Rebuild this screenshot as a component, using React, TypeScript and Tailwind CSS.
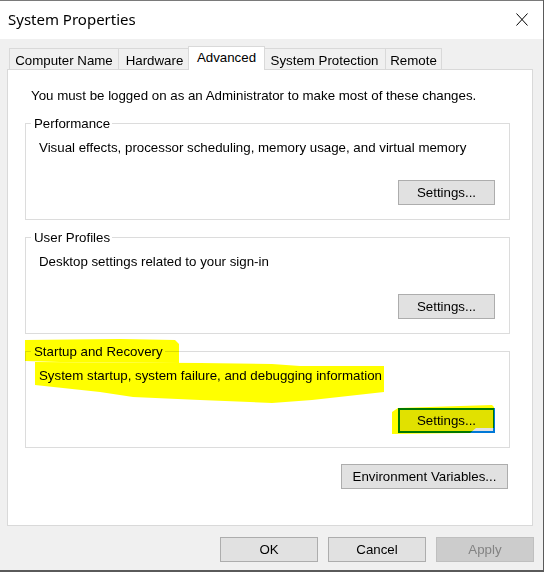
import React from 'react';

const FONT = { fontFamily: '"Liberation Sans", Arial, sans-serif' };

const tabs = [
  { label: 'Computer Name', cls: 'ml-[2px] w-[110px]' },
  { label: 'Hardware', cls: '-ml-px w-[73px]' },
  { label: 'Advanced', cls: '-ml-[3px] -mr-[2px] w-[77px]', active: true },
  { label: 'System Protection', cls: 'w-[123px]' },
  { label: 'Remote', cls: '-ml-px w-[57px]' },
];

const Button: React.FC<{ children: React.ReactNode; className?: string; focused?: boolean; disabled?: boolean }> = ({
  children,
  className = '',
  focused,
  disabled,
}) => {
  let look = 'bg-[#e1e1e1] border border-[#adadad] text-black';
  if (focused) look = 'bg-[#e1e1e1] border-2 border-[#0078d7] text-black';
  if (disabled) look = 'bg-[#cccccc] border border-[#bfbfbf] text-[#838383]';
  return (
    <div className={`h-[25px] flex items-center justify-center text-[13.3px] leading-[15px] ${look} ${className}`}>
      {children}
    </div>
  );
};

const Group: React.FC<{ title: string; text: string; className?: string; focused?: boolean }> = ({
  title,
  text,
  className = '',
  focused,
}) => (
  <fieldset className={`w-[485px] border border-[#dcdcdc] p-0 m-0 ${className}`}>
    <legend className="ml-[5px] pl-[3px] pr-[2px] text-[13.3px] leading-[15px]">{title}</legend>
    <div className="pl-[13px] pr-[14px] pt-[9px] pb-[14px]">
      <div className="text-[13.3px] leading-[15px]">{text}</div>
      <div className="flex justify-end mt-[25px]">
        <Button className="w-[97px]" focused={focused}>
          Settings...
        </Button>
      </div>
    </div>
  </fieldset>
);

export default function App() {
  return (
    <div className="w-[544px] h-[572px] bg-[#5a5a5a]" style={FONT}>
      <div className="relative w-[543px] h-[570px] bg-[#f0f0f0] flex flex-col text-black">
        {/* title bar */}
        <div className="h-[39px] bg-white border-t border-[#7a7a7a] flex items-center justify-between pl-[8px] pr-[15px]">
          <span className="text-[15px] leading-[20px] pb-[2px]" style={{ fontFamily: '"Noto Sans", "Open Sans", sans-serif' }}>
            System Properties
          </span>
          <svg width="12" height="13" viewBox="0 0 12 13" className="mt-[-1px]">
            <path d="M0.5 0.5 L11.5 12.5 M11.5 0.5 L0.5 12.5" stroke="#000" strokeWidth="1" fill="none" />
          </svg>
        </div>

        <div className="pt-[7px] pl-[7px] pr-[9px] flex flex-col">
          {/* tabs */}
          <div className="flex items-end h-[23px]">
            {tabs.map((t) =>
              t.active ? (
                <div
                  key={t.label}
                  className={`relative z-10 h-[24px] -mb-px bg-white border-t border-l border-r border-[#d9d9d9] flex items-center justify-center pb-[3px] text-[13.3px] leading-[15px] ${t.cls}`}
                >
                  {t.label}
                </div>
              ) : (
                <div
                  key={t.label}
                  className={`h-[21px] bg-[#f0f0f0] border-t border-l border-r border-[#d9d9d9] flex items-center justify-center pt-[2px] text-[13.3px] leading-[15px] ${t.cls}`}
                >
                  {t.label}
                </div>
              )
            )}
          </div>

          {/* panel */}
          <div className="w-[526px] h-[457px] bg-white border border-[#d9d9d9] pl-[17px] pt-[18px] flex flex-col">
            <div className="pl-[6px] text-[13.3px] leading-[15px]">
              You must be logged on as an Administrator to make most of these changes.
            </div>
            <Group className="mt-[13px]" title="Performance" text="Visual effects, processor scheduling, memory usage, and virtual memory" />
            <Group className="mt-[10px]" title="User Profiles" text="Desktop settings related to your sign-in" />
            <Group
              className="mt-[10px]"
              title="Startup and Recovery"
              text="System startup, system failure, and debugging information"
              focused
            />
            <div className="w-[485px] flex justify-end pr-[2px] mt-[16px]">
              <Button className="w-[167px]">Environment Variables...</Button>
            </div>
          </div>

          {/* dialog buttons */}
          <div className="flex justify-end gap-[10px] mt-[11px]">
            <Button className="w-[98px]">OK</Button>
            <Button className="w-[98px]">Cancel</Button>
            <Button className="w-[98px]" disabled>
              Apply
            </Button>
          </div>
        </div>

        {/* highlighter marks */}
        <svg
          className="absolute inset-0 pointer-events-none mix-blend-multiply"
          width="543"
          height="570"
          viewBox="0 0 543 570"
        >
          <g fill="#ffff00">
            <polygon points="25,340 120,339 175,340 179,344 179,363 60,362 25,361" />
            <polygon points="35,362 200,363 272,364 300,366 384,366 384,392 312,400 272,403 200,400 133,397 100,392 35,385" />
            <polygon points="392,412 398,408 492,405 494,407 494,428 476,428 470,433 392,434" />
          </g>
        </svg>
      </div>
    </div>
  );
}
